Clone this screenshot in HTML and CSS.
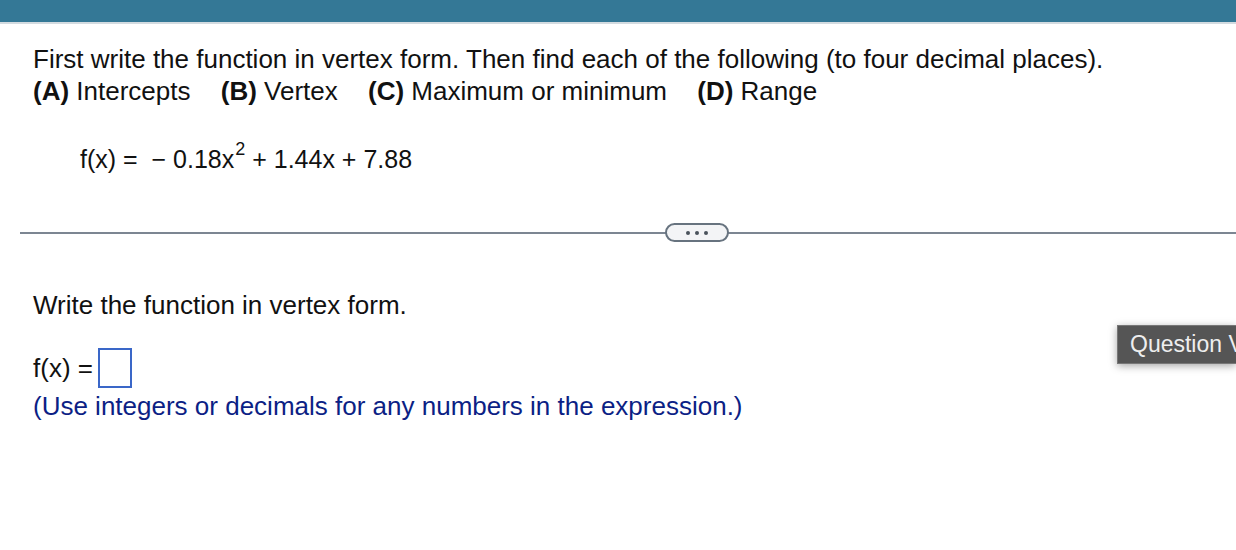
FILE: index.html
```html
<!DOCTYPE html>
<html lang="en">
<head>
  <meta charset="UTF-8">
  <title>Vertex form</title>
  <link rel="stylesheet" href="styles.css">
</head>
<body>
  <div class="topbar"></div>
  <div class="question">
    <p class="intro">First write the function in vertex form. Then find each of the following (to four decimal places).</p>
    <p class="parts">
      <span><b>(A)</b> Intercepts</span>
      <span><b>(B)</b> Vertex</span>
      <span><b>(C)</b> Maximum or minimum</span>
      <span><b>(D)</b> Range</span>
    </p>
    <p class="formula">f(x) = &nbsp;&minus; 0.18x<sup>2</sup> + 1.44x + 7.88</p>
  </div>
  <div class="divider">
    <button class="more"><span></span><span></span><span></span></button>
  </div>
  <div class="answer">
    <p class="prompt">Write the function in vertex form.</p>
    <p class="entry">f(x) = <span class="box"></span></p>
    <p class="hint">(Use integers or decimals for any numbers in the expression.)</p>
  </div>
  <div class="qtab"><span>Question Viewer</span></div>
</body>
</html>
```

FILE: styles.css
```css
* { box-sizing: border-box; }
html, body {
  margin: 0;
  padding: 0;
  background: #fff;
  font-family: 'Liberation Sans', Arial, sans-serif;
  color: #111;
  overflow: hidden;
}

.topbar {
  height: 24px;
  background: #347896;
  border-bottom: 2px solid #d3dbe0;
}

.question {
  padding: 19px 0 0 33px;
}

p { margin: 0; }

.intro, .parts {
  font-size: 26px;
  line-height: 32px;
}

.parts span { margin-right: 23px; }
.parts b { font-weight: bold; }

.formula {
  margin: 36px 0 0 47px;
  font-size: 25px;
  line-height: 32px;
}

.formula sup {
  font-size: 18px;
  vertical-align: 13px;
  line-height: 0;
  margin-left: 1px;
}

.divider {
  margin: 57px 0 0 20px;
  height: 2px;
  background: #7c8692;
  position: relative;
}

.more {
  position: absolute;
  left: 645px;
  top: -9px;
  width: 64px;
  height: 19px;
  padding: 0;
  border: 2px solid #67737f;
  border-radius: 10px;
  background: #f3f4f6;
  display: flex;
  justify-content: center;
  align-items: center;
  gap: 5px;
}

.more span {
  width: 4px;
  height: 4px;
  border-radius: 50%;
  background: #4a525c;
}

.answer {
  padding: 55px 0 0 33px;
}

.prompt {
  font-size: 26px;
  line-height: 32px;
}

.entry {
  margin-top: 27px;
  font-size: 26px;
  line-height: 40px;
  display: flex;
  align-items: center;
  gap: 5px;
}

.box {
  display: inline-block;
  width: 34px;
  height: 40px;
  border: 2px solid #3a67c8;
}

.hint {
  margin-top: 2px;
  font-size: 26px;
  line-height: 32px;
  color: #0c1f85;
}

.qtab {
  position: absolute;
  right: 0;
  top: 325px;
  width: 119px;
  height: 39px;
  padding-left: 12px;
  background: #555;
  border: 1px solid #777;
  border-right: none;
  color: #eee;
  font-size: 23px;
  line-height: 37px;
  white-space: nowrap;
  overflow: hidden;
  box-shadow: 0 2px 8px rgba(0, 0, 0, 0.35);
}
```
